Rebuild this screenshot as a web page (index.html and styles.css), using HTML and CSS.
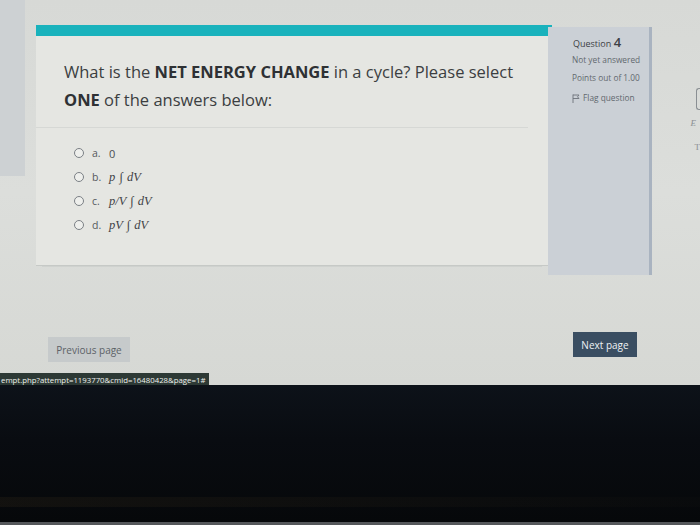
FILE: index.html
```html
<!DOCTYPE html>
<html>
<head>
<meta charset="utf-8">
<link rel="stylesheet" href="styles.css">
</head>
<body>
<div class="screen">
  <div class="left-strip"></div>
  <div class="main">
    <div class="qrow">
      <div class="card">
        <div class="card-bar"></div>
        <div class="card-body">
          <p class="qtext">What is the <b>NET ENERGY CHANGE</b> in a cycle? Please select<br><b>ONE</b> of the answers below:</p>
          <div class="sep"></div>
          <ul class="answers">
            <li><span class="radio"></span><span class="letter">a.</span><span class="val plain">0</span></li>
            <li><span class="radio"></span><span class="letter">b.</span><span class="val">p ∫ dV</span></li>
            <li><span class="radio"></span><span class="letter">c.</span><span class="val">p/V ∫ dV</span></li>
            <li><span class="radio"></span><span class="letter">d.</span><span class="val">pV ∫ dV</span></li>
          </ul>
        </div>
      </div>
      <div class="info">
        <div class="qnum">Question <b>4</b></div>
        <div class="meta">Not yet answered</div>
        <div class="meta">Points out of 1.00</div>
        <div class="meta flag"><svg width="8" height="9" viewBox="0 0 8 9"><path d="M1 0.5V9M1 1H7L5.5 2.8L7 4.5H1" fill="none" stroke="#6d737a" stroke-width="0.9"/></svg>Flag question</div>
      </div>
    </div>
    <div class="nav">
      <button class="btn prev">Previous page</button>
      <button class="btn next">Next page</button>
    </div>
  </div>
  <div class="right-edge">
    <span class="edge-box"></span>
    <span class="edge-e">E</span>
    <span class="edge-t">T</span>
  </div>
  <div class="status">empt.php?attempt=1193770&amp;cmid=16480428&amp;page=1#</div>
</div>
<div class="dark"><div class="dark-band"></div></div>
</body>
</html>
```
FILE: styles.css
```css
html, body {
  margin: 0;
  padding: 0;
  width: 700px;
  height: 525px;
  overflow: hidden;
  background: #07090c;
  font-family: "Open Sans", "Noto Sans", sans-serif;
}
.screen {
  position: relative;
  height: 385px;
  display: flex;
  background: linear-gradient(180deg, #d7d9d6 0%, #dcdedb 50%, #d6d8d4 100%);
}
.left-strip {
  width: 25px;
  height: 176px;
  background: #cdd1d3;
  flex: none;
}
.main {
  flex: none;
  width: 640px;
  margin-left: 11px;
  padding-top: 25px;
}
.qrow {
  display: flex;
  align-items: flex-start;
}
.card {
  width: 512px;
  height: 240px;
  background: #e5e6e2;
  border-bottom: 1px solid #c6c9c6;
  box-shadow: 0 7px 0 -6px #cfd2cf;
  flex: none;
}
.card-bar {
  height: 11px;
  background: #19b2bc;
  margin-right: -4px;
}
.card-body {
  padding: 22px 0 0 28px;
}
.qtext {
  margin: 0;
  font-family: "Open Sans", "Noto Sans", sans-serif;
  font-size: 16.5px;
  line-height: 28px;
  color: #3b3e41;
  white-space: nowrap;
}
.qtext b {
  font-weight: 700;
  color: #2e3134;
}
.sep {
  height: 1px;
  background: #d6d8d5;
  margin: 13px 20px 0 -28px;
}
.answers {
  list-style: none;
  margin: 0;
  padding: 13px 0 0 10px;
}
.answers li {
  height: 24px;
  display: flex;
  align-items: center;
  color: #55595d;
}
.radio {
  width: 8px;
  height: 8px;
  border: 1px solid #7b8085;
  border-radius: 50%;
  background: #eeefec;
  margin-right: 8px;
}
.letter {
  font-size: 10.5px;
  width: 17px;
}
.val {
  font-family: "Liberation Serif", "DejaVu Serif", serif;
  font-style: italic;
  font-size: 12.5px;
  color: #3f4246;
  word-spacing: 1px;
}
.val.plain {
  font-family: "Open Sans", sans-serif;
  font-style: normal;
  font-size: 11px;
  color: #4a4e52;
}
.info {
  width: 104px;
  height: 248px;
  margin-top: 2px;
  background: #cbd0d6;
  border-right: 3px solid #a9b3c0;
  padding: 8px 0 0 25px;
  box-sizing: border-box;
  flex: none;
}
.qnum {
  font-size: 9px;
  color: #3d4145;
  line-height: 14px;
}
.qnum b {
  font-size: 13px;
  font-weight: 600;
}
.meta {
  font-size: 8.3px;
  color: #62686e;
  line-height: 18px;
  white-space: nowrap;
  margin-left: -1px;
}
.flag {
  margin-top: 2px;
  display: flex;
  align-items: center;
  gap: 3px;
}
.nav {
  display: flex;
  justify-content: space-between;
  align-items: flex-start;
  margin-top: 58px;
  padding: 0 0 0 12px;
  width: 589px;
}
.btn {
  border: none;
  font-family: "Open Sans", sans-serif;
  font-size: 10px;
  padding: 0;
  height: 25px;
}
.prev {
  width: 82px;
  margin-top: 4px;
  background: #c6cacb;
  color: #5c6267;
}
.next {
  width: 64px;
  margin-top: -1px;
  background: #3a4e62;
  color: #eef1f4;
}
.right-edge {
  flex: 1;
  display: flex;
  flex-direction: column;
  align-items: flex-end;
  padding-top: 88px;
  color: #8a8f93;
  font-family: "Liberation Serif", serif;
  font-size: 9px;
}
.edge-box {
  width: 3px;
  height: 20px;
  border: 1px solid #8a8f93;
  border-right: none;
  border-radius: 3px 0 0 3px;
}
.edge-e {
  margin-top: 8px;
  margin-right: 4px;
  font-style: italic;
}
.edge-t {
  margin-top: 14px;
}
.status {
  position: absolute;
  left: 0;
  bottom: -2px;
  width: 209px;
  height: 14px;
  background: #2d3935;
  color: #eef1ee;
  font-size: 7.8px;
  line-height: 14px;
  padding-left: 1px;
  white-space: nowrap;
  overflow: hidden;
  box-sizing: border-box;
}
.dark {
  height: 140px;
  background: linear-gradient(180deg, #0d1219 0%, #090c11 40%, #06080a 100%);
  border-bottom: 3px solid #55585b;
  box-sizing: border-box;
  position: relative;
}
.dark-band {
  position: absolute;
  left: 0;
  right: 0;
  top: 112px;
  height: 10px;
  background: linear-gradient(90deg, rgba(60,48,28,0.22), rgba(30,28,22,0.1));
}
```
